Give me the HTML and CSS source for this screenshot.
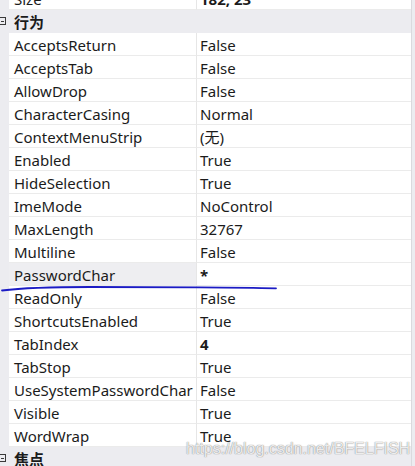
FILE: index.html
```html
<!DOCTYPE html>
<html lang="zh">
<head>
<meta charset="utf-8">
<title>Properties</title>
<link rel="stylesheet" href="styles.css">
</head>
<body>
<div class="grid">
  <div class="row"><div class="gutter"></div><div class="name">Size</div><div class="value bold">182, 23</div></div>
  <div class="row cat"><div class="gutter"><span class="toggle"></span></div><div class="cat-label">行为</div></div>
  <div class="row"><div class="gutter"></div><div class="name">AcceptsReturn</div><div class="value">False</div></div>
  <div class="row"><div class="gutter"></div><div class="name">AcceptsTab</div><div class="value">False</div></div>
  <div class="row"><div class="gutter"></div><div class="name">AllowDrop</div><div class="value">False</div></div>
  <div class="row"><div class="gutter"></div><div class="name">CharacterCasing</div><div class="value">Normal</div></div>
  <div class="row"><div class="gutter"></div><div class="name">ContextMenuStrip</div><div class="value">(无)</div></div>
  <div class="row"><div class="gutter"></div><div class="name">Enabled</div><div class="value">True</div></div>
  <div class="row"><div class="gutter"></div><div class="name">HideSelection</div><div class="value">True</div></div>
  <div class="row"><div class="gutter"></div><div class="name">ImeMode</div><div class="value">NoControl</div></div>
  <div class="row"><div class="gutter"></div><div class="name">MaxLength</div><div class="value">32767</div></div>
  <div class="row"><div class="gutter"></div><div class="name">Multiline</div><div class="value">False</div></div>
  <div class="row selected"><div class="gutter"></div><div class="name">PasswordChar</div><div class="value bold">*</div></div>
  <div class="row"><div class="gutter"></div><div class="name">ReadOnly</div><div class="value">False</div></div>
  <div class="row"><div class="gutter"></div><div class="name">ShortcutsEnabled</div><div class="value">True</div></div>
  <div class="row"><div class="gutter"></div><div class="name">TabIndex</div><div class="value bold">4</div></div>
  <div class="row"><div class="gutter"></div><div class="name">TabStop</div><div class="value">True</div></div>
  <div class="row"><div class="gutter"></div><div class="name">UseSystemPasswordChar</div><div class="value">False</div></div>
  <div class="row"><div class="gutter"></div><div class="name">Visible</div><div class="value">True</div></div>
  <div class="row"><div class="gutter"></div><div class="name">WordWrap</div><div class="value">True</div></div>
  <div class="row cat"><div class="gutter"><span class="toggle"></span></div><div class="cat-label">焦点</div></div>
</div>
<svg class="ink" width="415" height="466" viewBox="0 0 415 466" aria-hidden="true">
  <path d="M2 290.5 Q 30 287 90 287 L 200 287.3 Q 250 287.5 276 288.3" fill="none" stroke="#1b1bc4" stroke-width="1.8" stroke-linecap="round"/>
</svg>
<div class="watermark">https://blog.csdn.net/BFELFISH</div>
</body>
</html>
```
FILE: styles.css
```css
html, body {
  margin: 0;
  padding: 0;
}
body {
  width: 415px;
  height: 466px;
  overflow: hidden;
  background: #ececf0;
  position: relative;
  font-family: "Noto Sans", "Open Sans", "Noto Sans CJK SC", sans-serif;
  font-size: 15px;
  color: #1b1b1b;
}
.grid {
  width: 411px;
  margin-top: -13px;
  border-right: 1px solid #dadade;
  display: flex;
  flex-direction: column;
}
.row {
  display: flex;
  height: 23px;
  box-sizing: border-box;
  background: #ffffff;
}
.gutter {
  width: 9px;
  flex: none;
  background: #ececf0;
  position: relative;
}
.name, .value {
  box-sizing: border-box;
  height: 23px;
  line-height: 22px;
  padding-top: 1px;
  border-bottom: 1px solid #ebebeb;
  white-space: nowrap;
  overflow: hidden;
}
.name {
  width: 188px;
  flex: none;
  padding-left: 5px;
  border-right: 1px solid #e6e6e6;
}
.value {
  flex: 1;
  padding-left: 3px;
}
.bold {
  font-weight: 700;
}
.selected .name {
  background: #eeeef1;
}
.cat {
  background: #ececf0;
}
.cat-label {
  flex: 1;
  padding-left: 5px;
  line-height: 23px;
  font-family: "Noto Sans CJK SC", sans-serif;
  font-weight: 700;
}
.toggle {
  position: absolute;
  left: -1px;
  top: 7px;
  width: 7px;
  height: 8px;
  border: 1px solid #3a3a3a;
  box-sizing: border-box;
}
.toggle::after {
  content: "";
  position: absolute;
  left: 1px;
  right: 1px;
  top: 2.5px;
  height: 1px;
  background: #3a3a3a;
}
.ink {
  position: absolute;
  left: 0;
  top: 0;
  pointer-events: none;
}
.watermark {
  position: absolute;
  left: 186px;
  top: 440px;
  font-family: "Liberation Sans", Arial, sans-serif;
  font-size: 16px;
  color: rgba(255, 255, 255, 0.85);
  text-shadow: 0 0 1px rgba(120, 120, 120, 0.8), 0 0 1px rgba(120, 120, 120, 0.6);
  white-space: nowrap;
}
```
